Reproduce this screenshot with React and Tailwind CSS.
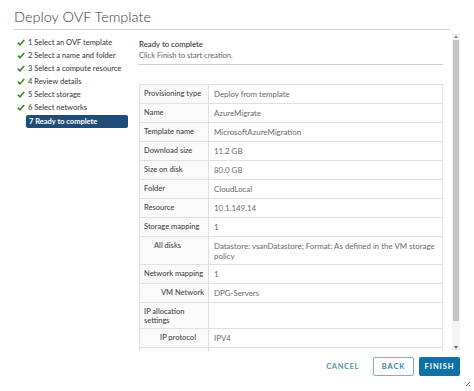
import React from 'react';

const steps = [
  '1 Select an OVF template',
  '2 Select a name and folder',
  '3 Select a compute resource',
  '4 Review details',
  '5 Select storage',
  '6 Select networks',
];

const rows = [
  { l: 'Provisioning type', v: 'Deploy from template' },
  { l: 'Name', v: 'AzureMigrate' },
  { l: 'Template name', v: 'MicrosoftAzureMigration' },
  { l: 'Download size', v: '11.2 GB' },
  { l: 'Size on disk', v: '80.0 GB' },
  { l: 'Folder', v: 'CloudLocal' },
  { l: 'Resource', v: '10.1.149.14' },
  { l: 'Storage mapping', v: '1' },
  { l: 'All disks', v: 'Datastore: vsanDatastore; Format: As defined in the VM storage policy', ind: 'pl-[14px]' },
  { l: 'Network mapping', v: '1' },
  { l: 'VM Network', v: 'DPG-Servers', ind: 'pl-[21px]' },
  { l: 'IP allocation settings', v: '' },
  { l: 'IP protocol', v: 'IPV4', ind: 'pl-[20px]' },
  { l: '', v: '' },
];

function Check() {
  return (
    <svg width="8" height="7" viewBox="0 0 8 7" className="shrink-0">
      <path d="M0.8 3.6 L3 5.8 L7.2 1" fill="none" stroke="#3d8a1f" strokeWidth="1.6" />
    </svg>
  );
}

export default function App() {
  return (
    <div
      className="relative w-[474px] h-[391px] bg-white overflow-hidden text-[#333]"
      style={{ fontFamily: 'Lato, "Open Sans", sans-serif' }}
    >
      {/* header */}
      <div className="mx-[13px] mr-[24px] h-[30px] border-b border-[#cfcfcf] flex items-end pb-[2px]">
        <div className="text-[14.5px] leading-[20px] font-light text-[#3a3a3a] pl-[1px]">Deploy OVF Template</div>
      </div>

      <div className="flex">
        {/* nav */}
        <div className="w-[125px] ml-[13px] pt-[6px] flex flex-col">
          {steps.map((s) => (
            <div key={s} className="h-[13px] flex items-center gap-[3px] pl-[4px]">
              <Check />
              <span className="text-[7.5px] leading-[13px] text-[#444] font-medium whitespace-nowrap">{s}</span>
            </div>
          ))}
          <div className="ml-[13px] mt-[1px] w-[102px] h-[13px] rounded-[2px] bg-[#1f4d7a] flex items-center pl-[3px]">
            <span className="text-[7.5px] leading-[13px] font-bold text-white whitespace-nowrap">7 Ready to complete</span>
          </div>
        </div>

        {/* content */}
        <div className="flex h-[321px] pt-[3px]">
          <div className="w-[305px] overflow-hidden pt-[5px]">
            <div className="text-[7.8px] leading-[12px] font-medium text-[#333] pl-[1px]">Ready to complete</div>
            <div className="text-[7.5px] leading-[12px] text-[#666] pl-[1px]">Click Finish to start creation.</div>
            <div className="border-b border-[#cfcfcf] mt-[2px]" />
            <div className="mt-[19px] border-t border-x border-[#e0e0e0] ml-[1px] w-[304px]">
              {rows.map((r, i) => (
                <div key={i} className="flex border-b border-[#e0e0e0] min-h-[19px]">
                  <div
                    className={`w-[69px] shrink-0 border-r border-[#e0e0e0] bg-[#fafafa] pt-[4px] pb-[3px] pr-[2px] ${r.ind || 'pl-[4px]'} text-[7.5px] leading-[9px] font-medium text-[#454545]`}
                  >
                    {r.l}
                  </div>
                  <div className="flex-1 pl-[5px] pr-[6px] pt-[4px] pb-[3px] text-[7.9px] leading-[10px] text-[#6a6a6a]">
                    {r.v}
                  </div>
                </div>
              ))}
            </div>
          </div>
          {/* scrollbar */}
          <div className="ml-[9px] w-[8px] flex flex-col bg-[#f3f3f3]">
            <div className="h-[7px] flex items-center justify-center">
              <svg width="4" height="3" viewBox="0 0 4 3"><path d="M0 3 L2 0 L4 3Z" fill="#8a8a8a" /></svg>
            </div>
            <div className="h-[281px] bg-[#c4c4c4] mx-[1px]" />
            <div className="flex-1" />
            <div className="h-[8px] flex items-center justify-center">
              <svg width="4" height="3" viewBox="0 0 4 3"><path d="M0 0 L4 0 L2 3Z" fill="#6a6a6a" /></svg>
            </div>
          </div>
        </div>
      </div>

      {/* footer */}
      <div className="flex justify-end items-center mt-[6px] mr-[14px] gap-[5px]">
        <div className="text-[7.5px] font-bold tracking-[0.6px] text-[#5b93ad] pr-[9px]">CANCEL</div>
        <div className="w-[41px] h-[19px] border border-[#7fb0c9] rounded-[2px] flex items-center justify-center text-[7.5px] font-bold tracking-[0.9px] text-[#3f86aa]">
          BACK
        </div>
        <div className="w-[41px] h-[19px] rounded-[2px] bg-[#0c72a6] flex items-center justify-center text-[7.5px] font-bold tracking-[0.9px] text-white">
          FINISH
        </div>
      </div>

      {/* resize grip */}
      <svg className="absolute right-[3px] bottom-[4px]" width="6" height="6" viewBox="0 0 6 6">
        <path d="M1 5 L5 1" stroke="#777" strokeWidth="1" />
        <path d="M4 5 L5 4" stroke="#777" strokeWidth="1" />
      </svg>
    </div>
  );
}
